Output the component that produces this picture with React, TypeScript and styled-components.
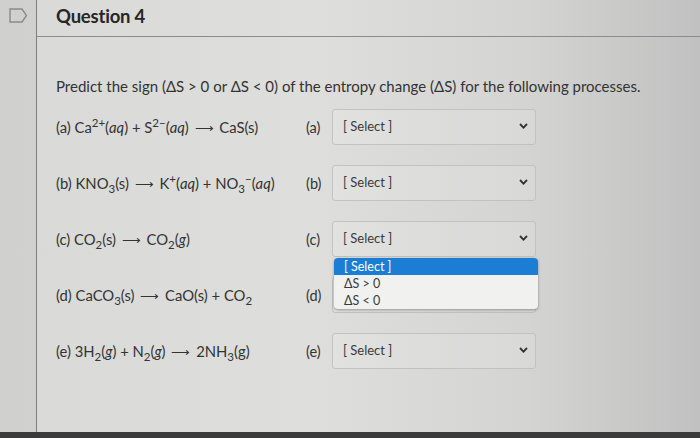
import React from "react";
import styled, { createGlobalStyle } from "styled-components";

const Global = createGlobalStyle`
  html, body { margin: 0; padding: 0; }
  body { width: 700px; height: 438px; overflow: hidden; font-family: Lato, "Open Sans", "Liberation Sans", sans-serif; }
`;

const Frame = styled.div`
  width: 700px;
  height: 438px;
  display: flex;
  flex-direction: column;
`;

const Screen = styled.div`
  flex: 1;
  display: flex;
  background: linear-gradient(to right, #d9d9d7 0%, #dededc 45%, #d4d4d3 75%, #c1c1c1 100%);
  color: #2e2e2e;
`;

const Bezel = styled.div`
  height: 6px;
  background: #3b3b3b;
`;

const Sidebar = styled.div`
  width: 37px;
  border-right: 1px solid #7d7d7d;
  background: rgba(0, 0, 0, 0.04);
  display: flex;
  justify-content: center;
  padding-top: 8px;
  box-sizing: border-box;
`;

const Main = styled.div`
  flex: 1;
  display: flex;
  flex-direction: column;
`;

const Header = styled.div`
  height: 37px;
  border-bottom: 1px solid #8c8c8c;
  display: flex;
  align-items: center;
  padding-left: 19px;
  padding-bottom: 4px;
  box-sizing: border-box;
`;

const Title = styled.h2`
  margin: 0;
  font-size: 18.5px;
  font-weight: 700;
  color: #262626;
  letter-spacing: -0.2px;
`;

const Body = styled.div`
  padding: 39px 0 0 19px;
`;

const Prompt = styled.p`
  margin: 0 0 12px;
  font-size: 15px;
  line-height: 21px;
  color: #333;
`;

const Rows = styled.div`
  display: grid;
  grid-template-columns: 250px 26px 204px;
  grid-auto-rows: 36px;
  row-gap: 20px;
  align-items: center;
`;

const Equation = styled.div`
  font-size: 14.8px;
  color: #333;
  white-space: nowrap;
  sub, sup { font-size: 11.5px; line-height: 0; }
`;

const Label = styled.div`
  font-size: 14.5px;
  color: #333;
`;

const SelectWrap = styled.div`
  position: relative;
  height: 36px;
`;

const SelectBox = styled.div`
  height: 36px;
  box-sizing: border-box;
  border: 1px solid #c2c2c0;
  border-radius: 3px;
  background: rgba(255, 255, 255, 0.12);
  display: flex;
  align-items: center;
  justify-content: space-between;
  padding: 0 7px 2px 10px;
  font-size: 13px;
  color: #3a3a3a;
`;

const Chevron = styled.svg`
  width: 9px;
  height: 6px;
`;

const Dropdown = styled.ul`
  position: absolute;
  top: calc(100% + 1px);
  left: 2px;
  width: 204px;
  margin: 0;
  padding: 0;
  list-style: none;
  background: #f1f1f0;
  border-radius: 4px;
  box-shadow: 0 1px 3px rgba(0, 0, 0, 0.35);
  overflow: hidden;
  z-index: 2;
`;

const Option = styled.li<{ $active?: boolean }>`
  height: 17px;
  line-height: 17px;
  padding-left: 10px;
  font-size: 12.5px;
  color: ${(p) => (p.$active ? "#fff" : "#3a3a3a")};
  background: ${(p) => (p.$active ? "#1b7dd3" : "transparent")};
`;

const ArrowGlyph = styled.span`
  margin: 0 2px;
  font-size: 13px;
`;

const Arrow = () => <ArrowGlyph>⟶</ArrowGlyph>;

const ChevronIcon = () => (
  <Chevron viewBox="0 0 9 6">
    <path d="M1 1 L4.5 4.6 L8 1" fill="none" stroke="#333" strokeWidth="1.8" />
  </Chevron>
);

const FlagIcon = () => (
  <svg width="19" height="15" viewBox="0 0 19 15">
    <path d="M1 1 H13 L17.5 7.5 L13 14 H1 Z" fill="none" stroke="#8a8a8a" strokeWidth="1.4" />
  </svg>
);

const rows: { key: string; eq: React.ReactNode; open?: boolean }[] = [
  {
    key: "a",
    eq: (
      <>
        (a) Ca<sup>2+</sup>(<i>aq</i>) + S<sup>2−</sup>(<i>aq</i>) <Arrow /> CaS(s)
      </>
    ),
  },
  {
    key: "b",
    eq: (
      <>
        (b) KNO<sub>3</sub>(s) <Arrow /> K<sup>+</sup>(<i>aq</i>) + NO<sub>3</sub>
        <sup>−</sup>(<i>aq</i>)
      </>
    ),
  },
  {
    key: "c",
    eq: (
      <>
        (c) CO<sub>2</sub>(s) <Arrow /> CO<sub>2</sub>(<i>g</i>)
      </>
    ),
    open: true,
  },
  {
    key: "d",
    eq: (
      <>
        (d) CaCO<sub>3</sub>(s) <Arrow /> CaO(s) + CO<sub>2</sub>
      </>
    ),
  },
  {
    key: "e",
    eq: (
      <>
        (e) 3H<sub>2</sub>(<i>g</i>) + N<sub>2</sub>(<i>g</i>) <Arrow /> 2NH<sub>3</sub>(g)
      </>
    ),
  },
];

export default function App() {
  return (
    <Frame>
      <Global />
      <Screen>
        <Sidebar>
          <FlagIcon />
        </Sidebar>
        <Main>
          <Header>
            <Title>Question 4</Title>
          </Header>
          <Body>
            <Prompt>
              Predict the sign (ΔS &gt; 0 or ΔS &lt; 0) of the entropy change (ΔS) for the following processes.
            </Prompt>
            <Rows>
              {rows.map((r) => (
                <React.Fragment key={r.key}>
                  <Equation>{r.eq}</Equation>
                  <Label>({r.key})</Label>
                  <SelectWrap>
                    <SelectBox>
                      <span>[ Select ]</span>
                      <ChevronIcon />
                    </SelectBox>
                    {r.open && (
                      <Dropdown>
                        <Option $active>[ Select ]</Option>
                        <Option>ΔS &gt; 0</Option>
                        <Option>ΔS &lt; 0</Option>
                      </Dropdown>
                    )}
                  </SelectWrap>
                </React.Fragment>
              ))}
            </Rows>
          </Body>
        </Main>
      </Screen>
      <Bezel />
    </Frame>
  );
}
